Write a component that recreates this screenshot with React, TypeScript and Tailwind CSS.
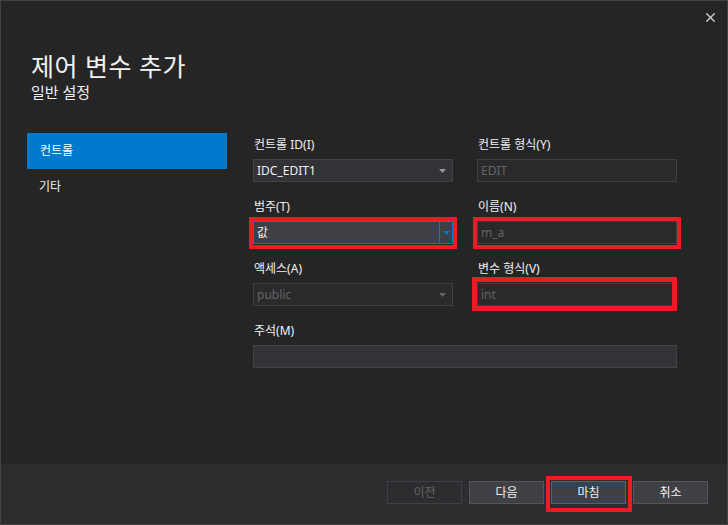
import { X } from "lucide-react"

const FONT = { fontFamily: '"Noto Sans", "Noto Sans CJK KR", sans-serif' }

function Arrow({ color }: { color: string }) {
  return (
    <svg width="7" height="4" viewBox="0 0 7 4" className="shrink-0">
      <path d="M0 0 H7 L3.5 4 Z" fill={color} />
    </svg>
  )
}

function Label({ children }: { children: React.ReactNode }) {
  return <div className="h-4 leading-4 text-[12px] text-[#f1f1f1] mb-[6px] pl-px">{children}</div>
}

export default function App() {
  return (
    <div style={FONT} className="w-[728px] h-[525px] border border-[#434346] bg-[#252526] flex flex-col overflow-hidden">
      <div className="flex-1 flex flex-col">
        {/* close */}
        <div className="flex justify-end pt-[9px] pr-[9px] h-[30px]">
          <X size={15} strokeWidth={2.4} className="text-[#c8c8c8]" />
        </div>

        {/* title */}
        <div className="pl-[30px] pt-[19px]">
          <div className="text-[25px] leading-[32px] text-[#f1f1f1] tracking-[0.5px]">제어 변수 추가</div>
          <div className="text-[15px] leading-[20px] text-[#f1f1f1]">일반 설정</div>
        </div>

        {/* body */}
        <div className="flex pl-[26px] pt-[31px] gap-[26px]">
          <div className="w-[200px] flex flex-col">
            <div className="h-[36px] bg-[#007acc] text-white text-[12px] flex items-center pl-[13px]">컨트롤</div>
            <div className="h-[36px] text-[#f1f1f1] text-[12px] flex items-center pl-[12px]">기타</div>
          </div>

          <div className="grid grid-cols-[200px_200px] gap-x-[24px] gap-y-[17px] pt-[4px]">
            <div>
              <Label>컨트롤 ID(I)</Label>
              <div className="h-[23px] bg-[#333337] border border-[#434346] flex items-center pl-[3px] pr-[6px] text-[12px] text-[#f1f1f1]">
                <span className="flex-1">IDC_EDIT1</span>
                <Arrow color="#999999" />
              </div>
            </div>
            <div>
              <Label>컨트롤 형식(Y)</Label>
              <div className="h-[23px] bg-[#2a2a2c] border border-[#3f3f46] flex items-center pl-[3px] text-[12px] text-[#656565]">EDIT</div>
            </div>

            <div>
              <Label>범주(T)</Label>
              <div className="relative">
                <div className="h-[23px] bg-[#3f3f46] border border-[#007acc] flex items-center text-[12px] text-[#f1f1f1]">
                  <span className="flex-1 pl-[3px]">값</span>
                  <div className="w-[13px] h-full border-l border-[#007acc] flex items-center justify-center">
                    <Arrow color="#007acc" />
                  </div>
                </div>
                <div className="absolute -left-[4px] -top-[4px] -right-[4px] -bottom-[5px] border-[4px] border-[#ed1c24]" />
              </div>
            </div>
            <div>
              <Label>이름(N)</Label>
              <div className="relative">
                <div className="h-[23px] bg-[#2a2a2c] border border-[#3f3f46] flex items-center pl-[3px] text-[12px] text-[#656565]">m_a</div>
                <div className="absolute -left-[4px] -top-[4px] -right-[4px] -bottom-[5px] border-[4px] border-[#ed1c24]" />
              </div>
            </div>

            <div>
              <Label>액세스(A)</Label>
              <div className="h-[23px] bg-[#2a2a2c] border border-[#3f3f46] flex items-center pl-[3px] pr-[6px] text-[12px] text-[#656565]">
                <span className="flex-1">public</span>
                <Arrow color="#656565" />
              </div>
            </div>
            <div>
              <Label>변수 형식(V)</Label>
              <div className="relative">
                <div className="h-[23px] bg-[#2a2a2c] border border-[#3f3f46] flex items-center pl-[3px] text-[12px] text-[#656565]">int</div>
                <div className="absolute -left-[5px] -top-[6px] right-0 -bottom-[5px] border-[5px] border-[#ed1c24]" />
              </div>
            </div>

            <div className="col-span-2">
              <Label>주석(M)</Label>
              <div className="h-[23px] bg-[#333337] border border-[#434346]" />
            </div>
          </div>
        </div>
      </div>

      {/* footer */}
      <div className="h-[60px] bg-[#2d2d30] flex items-center justify-end gap-[7px] pr-[19px] pb-[3px] text-[12px]">
        <div className="w-[75px] h-[23px] border border-[#3f3f46] flex items-center justify-center text-[#656565]">이전</div>
        <div className="w-[75px] h-[23px] bg-[#3f3f46] border border-[#555555] flex items-center justify-center text-[#f1f1f1]">다음</div>
        <div className="relative">
          <div className="w-[75px] h-[23px] bg-[#3f3f46] border border-[#007acc] flex items-center justify-center text-[#f1f1f1]">마침</div>
          <div className="absolute -left-[5px] -top-[5px] -right-[6px] -bottom-[8px] border-[4px] border-[#ed1c24]" />
        </div>
        <div className="w-[75px] h-[23px] bg-[#3f3f46] border border-[#555555] flex items-center justify-center text-[#f1f1f1]">취소</div>
      </div>
    </div>
  )
}
